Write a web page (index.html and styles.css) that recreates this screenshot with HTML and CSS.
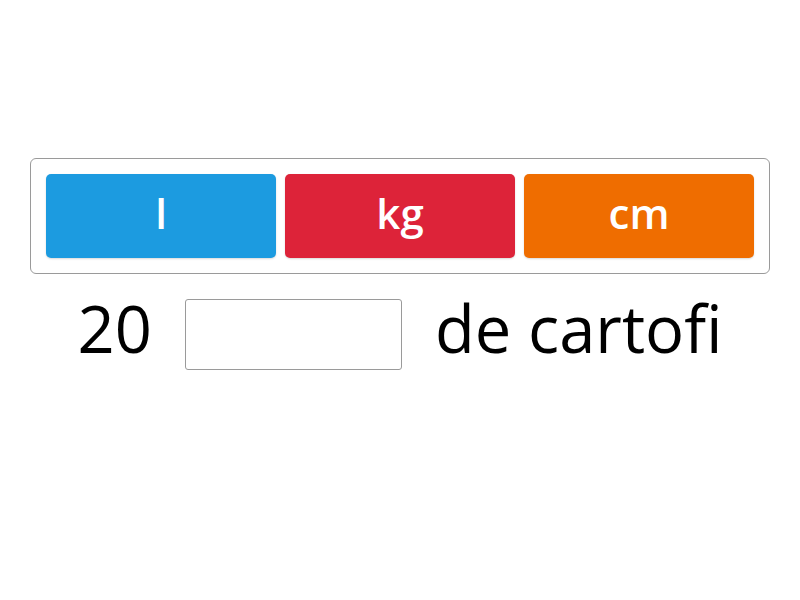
FILE: index.html
```html
<!DOCTYPE html>
<html>
<head>
<meta charset="utf-8">
<link rel="stylesheet" href="styles.css">
</head>
<body>
<div class="page">
  <div class="tray">
    <div class="chip chip-blue">l</div>
    <div class="chip chip-red">kg</div>
    <div class="chip chip-orange">cm</div>
  </div>
  <div class="sentence">
    <span class="word">20</span>
    <span class="slot"></span>
    <span class="word">de cartofi</span>
  </div>
</div>
</body>
</html>
```

FILE: styles.css
```css
html, body {
  margin: 0;
  padding: 0;
  background: #ffffff;
  font-family: "Open Sans", "Liberation Sans", sans-serif;
}
.page {
  width: 800px;
  height: 600px;
  padding-top: 158px;
  box-sizing: border-box;
  display: flex;
  flex-direction: column;
  align-items: center;
}
.tray {
  width: 740px;
  height: 116px;
  box-sizing: border-box;
  border: 1px solid #9a9a9a;
  border-radius: 6px;
  padding: 15px;
  display: flex;
  gap: 9px;
}
.chip {
  flex: 1;
  border-radius: 5px;
  color: #ffffff;
  font-weight: 600;
  font-size: 42px;
  padding-bottom: 8px;
  display: flex;
  align-items: center;
  justify-content: center;
  box-shadow: 0 1px 2px rgba(0,0,0,0.15);
}
.chip-blue { background: #1c9be0; }
.chip-red { background: #dd2339; }
.chip-orange { background: #ef6d00; }
.sentence {
  margin-top: 22px;
  display: flex;
  align-items: center;
  gap: 33px;
}
.word {
  font-size: 65px;
  color: #000000;
  line-height: 1;
  margin-bottom: 12px;
}
.slot {
  width: 217px;
  height: 71px;
  box-sizing: border-box;
  border: 1px solid #9a9a9a;
  border-radius: 3px;
}
```
